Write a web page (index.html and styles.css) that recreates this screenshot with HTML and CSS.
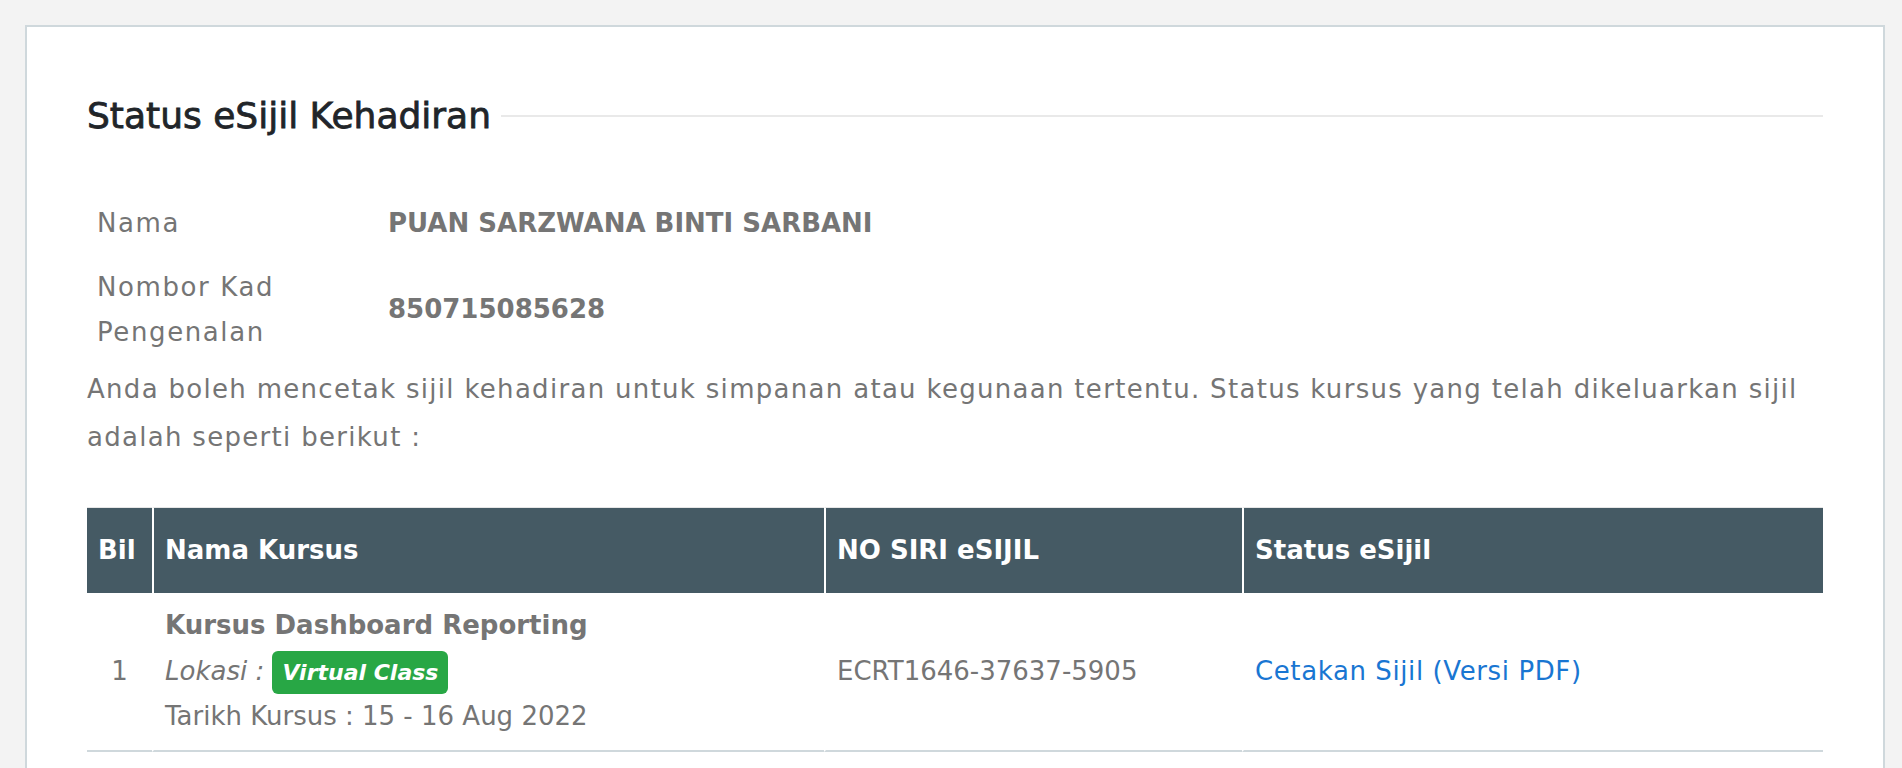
FILE: index.html
```html
<!DOCTYPE html>
<html lang="ms">
<head>
<meta charset="utf-8">
<title>Status eSijil Kehadiran</title>
<link rel="stylesheet" href="styles.css">
</head>
<body>
<div class="card">
  <div class="legend">
    <h2 class="legend-title">Status eSijil Kehadiran</h2>
    <span class="legend-rule"></span>
  </div>
  <table class="info">
    <tr>
      <td class="info-label">Nama</td>
      <td class="info-value">PUAN SARZWANA BINTI SARBANI</td>
    </tr>
    <tr>
      <td class="info-label">Nombor Kad Pengenalan</td>
      <td class="info-value">850715085628</td>
    </tr>
  </table>
  <p class="intro">Anda boleh mencetak sijil kehadiran untuk simpanan atau kegunaan tertentu. Status kursus yang telah dikeluarkan sijil adalah seperti berikut :</p>
  <table class="courses">
    <colgroup>
      <col class="col-bil">
      <col class="col-nama">
      <col class="col-siri">
      <col class="col-status">
    </colgroup>
    <thead>
      <tr>
        <th>Bil</th>
        <th>Nama Kursus</th>
        <th>NO SIRI eSIJIL</th>
        <th>Status eSijil</th>
      </tr>
    </thead>
    <tbody>
      <tr>
        <td class="num">1</td>
        <td>
          <div class="course-name">Kursus Dashboard Reporting</div>
          <div><em class="lokasi">Lokasi :</em> <span class="badge">Virtual Class</span></div>
          <div>Tarikh Kursus : 15 - 16 Aug 2022</div>
        </td>
        <td>ECRT1646-37637-5905</td>
        <td><a class="pdf-link" href="#">Cetakan Sijil (Versi PDF)</a></td>
      </tr>
    </tbody>
  </table>
</div>
</body>
</html>
```

FILE: styles.css
```css
html, body {
  margin: 0;
  padding: 0;
  height: 100%;
  overflow: hidden;
}
body {
  background: #f3f3f3;
  font-family: "DejaVu Sans", "Liberation Sans", sans-serif;
  font-size: 26px;
  color: #757575;
}
.card {
  margin: 25px 17px 0 25px;
  background: #fff;
  border: 2px solid #cfd8dc;
  padding: 67px 60px 60px 60px;
  min-height: 900px;
}
.legend {
  display: flex;
  align-items: center;
  gap: 10px;
}
.legend-title {
  margin: 0;
  font-size: 36px;
  line-height: 44px;
  font-weight: 400;
  color: #212529;
  -webkit-text-stroke: 0.8px #212529;
  white-space: nowrap;
}
.legend-rule {
  flex: 1;
  height: 2px;
  background: #e9e9e9;
}
.info {
  border-collapse: collapse;
  margin-top: 53px;
}
.info td {
  padding: 9.5px 12px 9.5px 10px;
  line-height: 45px;
  vertical-align: middle;
}
.info-label {
  width: 269px;
  letter-spacing: 1.6px;
}
.info-value {
  font-weight: 700;
}
.intro {
  margin: 1px 0 46px 0;
  line-height: 48px;
  letter-spacing: 1.3px;
}
.courses {
  width: 100%;
  table-layout: fixed;
  border-collapse: separate;
  border-spacing: 0;
}
.col-bil { width: 65px; }
.col-nama { width: 672px; }
.col-siri { width: 418px; }
.col-status { width: 581px; }
.courses th {
  background: #455a64;
  color: #fff;
  font-weight: 700;
  text-align: left;
  padding: 19.75px 11px;
  line-height: 45.5px;
  border-left: 2px solid #fff;
  border-top: 1px solid #e6e6e6;
}
.courses th:first-child {
  border-left: 0;
}
.courses td {
  padding: 10px 11px;
  line-height: 45.5px;
  vertical-align: middle;
  border-left: 2px solid #fff;
  border-bottom: 2px solid #cfd8dc;
}
.courses td:first-child {
  border-left: 0;
}
.courses td.num {
  text-align: center;
  padding: 10px 0;
}
.course-name {
  font-weight: 700;
}
.lokasi {
  font-style: italic;
}
.badge {
  display: inline-block;
  background: #28a745;
  color: #fff;
  font-weight: 700;
  font-style: italic;
  font-size: 22px;
  line-height: 27px;
  padding: 8px 10px;
  border-radius: 6px;
  vertical-align: middle;
}
.pdf-link {
  color: #1976d2;
  text-decoration: none;
  letter-spacing: 0.6px;
}
```
